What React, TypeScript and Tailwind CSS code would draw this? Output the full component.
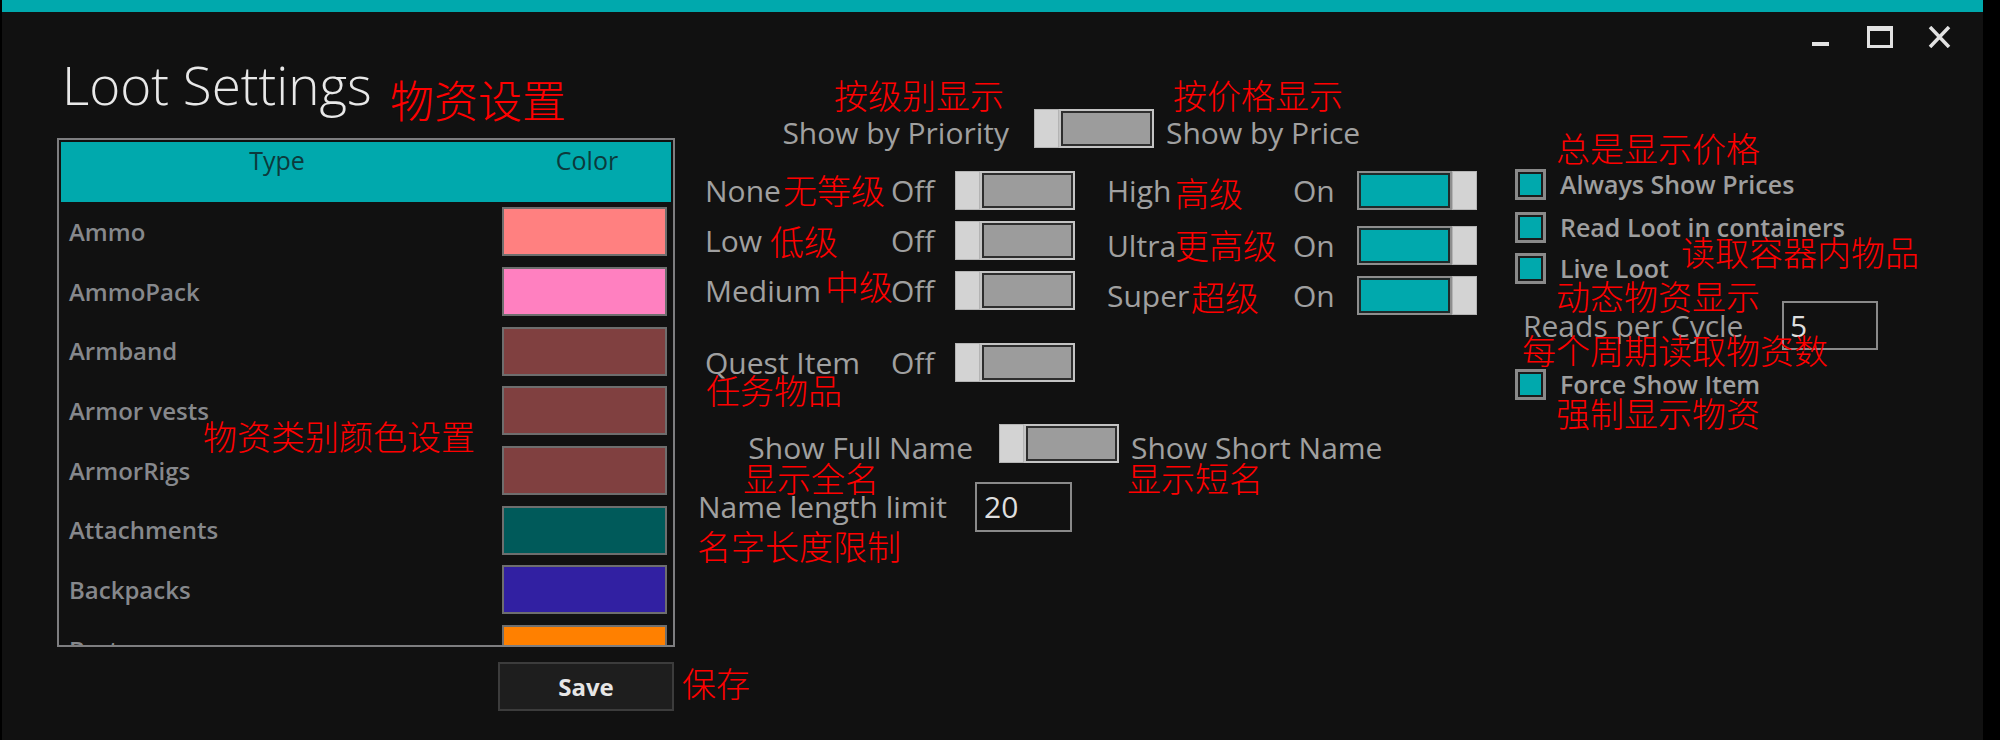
import React from "react";

const lootTypes = [
  { name: "Ammo", color: "bg-[#ff8080]" },
  { name: "AmmoPack", color: "bg-[#ff80c0]" },
  { name: "Armband", color: "bg-[#804040]" },
  { name: "Armor vests", color: "bg-[#804040]" },
  { name: "ArmorRigs", color: "bg-[#804040]" },
  { name: "Attachments", color: "bg-[#005a5a]" },
  { name: "Backpacks", color: "bg-[#3120a2]" },
  { name: "Barter", color: "bg-[#ff8000]" },
];

// red translation notes pasted over the window
const notes = [
  { text: "物资设置", cls: "left-[390px] top-[77px] text-[44px]" },
  { text: "物资类别颜色设置", cls: "left-[203px] top-[419px] text-[34px]" },
  { text: "保存", cls: "left-[682px] top-[666px] text-[34px]" },
  { text: "按级别显示", cls: "left-[834px] top-[78px] text-[34px]" },
  { text: "按价格显示", cls: "left-[1173px] top-[78px] text-[34px]" },
  { text: "无等级", cls: "left-[783px] top-[173px] text-[34px]" },
  { text: "低级", cls: "left-[770px] top-[224px] text-[34px]" },
  { text: "中级", cls: "left-[825px] top-[269px] text-[34px]" },
  { text: "高级", cls: "left-[1175px] top-[176px] text-[34px]" },
  { text: "更高级", cls: "left-[1175px] top-[228px] text-[34px]" },
  { text: "超级", cls: "left-[1191px] top-[280px] text-[34px]" },
  { text: "任务物品", cls: "left-[706px] top-[373px] text-[34px]" },
  { text: "显示全名", cls: "left-[743px] top-[461px] text-[34px]" },
  { text: "显示短名", cls: "left-[1127px] top-[461px] text-[34px]" },
  { text: "名字长度限制", cls: "left-[697px] top-[529px] text-[34px]" },
  { text: "总是显示价格", cls: "left-[1556px] top-[131px] text-[34px]" },
  { text: "读取容器内物品", cls: "left-[1681px] top-[235px] text-[34px]" },
  { text: "动态物资显示", cls: "left-[1556px] top-[279px] text-[34px]" },
  { text: "每个周期读取物资数", cls: "left-[1522px] top-[333px] text-[34px]" },
  { text: "强制显示物资", cls: "left-[1556px] top-[396px] text-[34px]" },
];

function Toggle({ on = false }: { on?: boolean }) {
  const thumb = <div className="w-[25px] h-full bg-[#d3d3d3] border border-[#b4b4b4]" />;
  return (
    <div className="flex h-[39px] w-[120px] shrink-0">
      {!on && thumb}
      <div
        className={
          on
            ? "flex-1 border-2 border-[#8e8e8e] p-[2px] bg-[#1f2a2a]"
            : "flex-1 border-2 border-[#c4c4c4] p-[2px] bg-[#2e2e2e]"
        }
      >
        <div className={on ? "h-full bg-[#00a9ad]" : "h-full bg-[#9c9c9c]"} />
      </div>
      {on && thumb}
    </div>
  );
}

function Check({ label }: { label: string }) {
  return (
    <div className="flex items-center gap-[14px] h-[31px]">
      <div className="w-[31px] h-[31px] border-[3px] border-[#8a8a8a] p-[2px] bg-[#1c1c1c]">
        <div className="h-full bg-[#00a9ad]" />
      </div>
      <span className="text-[25px] leading-none font-semibold text-[#9e9e9e]">{label}</span>
    </div>
  );
}

function LevelRow({ label, state, on, labelW }: { label: string; state: string; on?: boolean; labelW: string }) {
  return (
    <div className="flex items-center h-[39px] text-[30px] leading-none text-[#a0a0a0]">
      <span className={labelW}>{label}</span>
      <span className="w-[64px]">{state}</span>
      <Toggle on={on} />
    </div>
  );
}

export default function App() {
  return (
    <div className="relative w-[2000px] h-[740px] bg-black overflow-hidden font-['Open_Sans',sans-serif]">
      <div className="ml-[2px] w-[1981px] h-full bg-[#111111] flex flex-col">
        <div className="h-[12px] bg-[#00a9ad]" />

        {/* window buttons */}
        <div className="h-[46px] flex justify-end items-start pr-[32px] pt-[14px] text-[#e2e2e2]">
          <svg width="17" height="22" viewBox="0 0 17 22">
            <rect x="0" y="16" width="17" height="4" fill="currentColor" />
          </svg>
          <svg width="26" height="22" viewBox="0 0 26 22" className="ml-[38px]">
            <rect x="1.5" y="2" width="23" height="18.5" fill="none" stroke="currentColor" strokeWidth="3" />
            <rect x="0" y="0" width="26" height="5" fill="currentColor" />
          </svg>
          <svg width="23" height="22" viewBox="0 0 23 22" className="ml-[35px]">
            <path d="M2 1 L21 21 M21 1 L2 21" stroke="currentColor" strokeWidth="3.5" />
          </svg>
        </div>

        <div className="flex">
          {/* left: type / colour table */}
          <div className="ml-[55px] w-[618px] flex flex-col">
            <div className="h-[54px] pl-[5px] text-[53px] leading-none font-light text-[#e8e8e8]">Loot Settings</div>
            <div className="mt-[26px] h-[509px] border-2 border-[#7e7e80] p-[2px] overflow-hidden flex flex-col">
              <div className="h-[60px] shrink-0 bg-[#00a9ad] flex pt-[6px] text-[25px] leading-none text-[#0c3a3c]">
                <span className="w-[432px] text-center">Type</span>
                <span className="flex-1 text-center pl-[10px]">Color</span>
              </div>
              {lootTypes.map((t) => (
                <div key={t.name} className="h-[59.7px] shrink-0 flex items-center justify-between pl-[8px] pr-[4px]">
                  <span className="text-[24px] leading-none font-semibold text-[#86888c]">{t.name}</span>
                  <div className={`w-[165px] h-[49px] border-2 border-[#6e6e6e] ${t.color}`} />
                </div>
              ))}
            </div>
            <button className="mt-[15px] self-end mr-[1px] w-[176px] h-[49px] bg-[#1e1e1e] border-2 border-[#3c3c3c] text-[24px] leading-none font-bold text-[#e6e6e6] flex items-center justify-center">
              Save
            </button>
          </div>

          {/* middle: priority switches */}
          <div className="ml-[25px] w-[790px] flex flex-col text-[30px] leading-none text-[#a0a0a0]">
            <div className="mt-[51px] flex items-end h-[39px]">
              <span className="w-[309px] text-right">Show by Priority</span>
              <div className="ml-[25px]">
                <Toggle />
              </div>
              <span className="ml-[12px]">Show by Price</span>
            </div>

            <div className="mt-[23px] flex items-start">
              <div className="flex flex-col gap-[11px]">
                <LevelRow label="None" state="Off" labelW="w-[191px] pl-[5px]" />
                <LevelRow label="Low" state="Off" labelW="w-[191px] pl-[5px]" />
                <LevelRow label="Medium" state="Off" labelW="w-[191px] pl-[5px]" />
              </div>
              <div className="ml-[32px] flex flex-col">
                <LevelRow label="High" state="On" on labelW="w-[186px]" />
                <div className="mt-[16px]">
                  <LevelRow label="Ultra" state="On" on labelW="w-[186px]" />
                </div>
                <div className="mt-[11px]">
                  <LevelRow label="Super" state="On" on labelW="w-[186px]" />
                </div>
              </div>
            </div>

            <div className="mt-[28px]">
              <LevelRow label="Quest Item" state="Off" labelW="w-[191px] pl-[5px]" />
            </div>

            <div className="mt-[42px] flex items-end h-[39px]">
              <span className="w-[273px] text-right">Show Full Name</span>
              <div className="ml-[26px]">
                <Toggle />
              </div>
              <span className="ml-[12px]">Show Short Name</span>
            </div>

            <div className="mt-[19px] flex items-center h-[50px]">
              <span className="w-[277px] -ml-[2px]">Name length limit</span>
              <div className="w-[97px] h-[50px] border-2 border-[#8a8a8a] pl-[7px] flex items-center text-[#dedede]">20</div>
            </div>
          </div>

          {/* right: misc options */}
          <div className="ml-[25px] flex flex-col">
            <div className="mt-[111px]">
              <Check label="Always Show Prices" />
            </div>
            <div className="mt-[12px]">
              <Check label="Read Loot in containers" />
            </div>
            <div className="mt-[10px]">
              <Check label="Live Loot" />
            </div>
            <div className="mt-[17px] flex items-center h-[49px] text-[30px] leading-none text-[#9c9c9c]">
              <span className="w-[267px] pl-[8px]">Reads per Cycle</span>
              <div className="w-[96px] h-[49px] border-2 border-[#8a8a8a] pl-[6px] flex items-center text-[#dedede]">5</div>
            </div>
            <div className="mt-[19px]">
              <Check label="Force Show Item" />
            </div>
          </div>
        </div>
      </div>

      {notes.map((n) => (
        <span
          key={n.text}
          className={`absolute leading-none font-light text-[#ff0000] font-['Noto_Sans_CJK_SC',sans-serif] whitespace-nowrap ${n.cls}`}
        >
          {n.text}
        </span>
      ))}
    </div>
  );
}
